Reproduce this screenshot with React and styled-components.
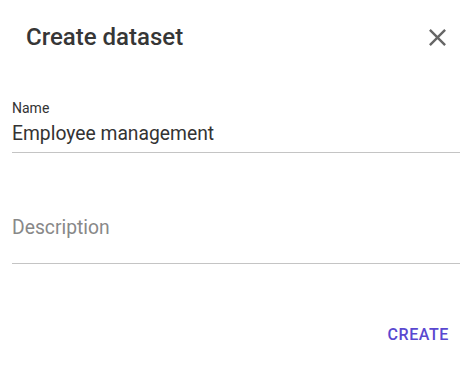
import styled, { createGlobalStyle } from 'styled-components';

const Global = createGlobalStyle`
    html, body {
        margin: 0;
        padding: 0;
        background: #ffffff;
    }
    body {
        font-family: Roboto, "Liberation Sans", sans-serif;
    }
`;

const Dialog = styled.div`
    width: 474px;
    height: 369px;
    box-sizing: border-box;
    background: #ffffff;
    display: flex;
    flex-direction: column;
`;

const Header = styled.div`
    display: flex;
    align-items: center;
    justify-content: space-between;
    height: 74px;
    padding: 0 21px 0 26px;
`;

const Title = styled.h2`
    margin: 0;
    font-size: 24px;
    font-weight: 500;
    color: #363636;
`;

const CloseButton = styled.button`
    border: 0;
    background: transparent;
    padding: 0;
    width: 32px;
    height: 32px;
    display: flex;
    align-items: center;
    justify-content: center;
    color: #666666;
    cursor: pointer;
`;

const Body = styled.div`
    display: flex;
    flex-direction: column;
    padding: 0 14px 0 12px;
`;

const Field = styled.label`
    display: flex;
    flex-direction: column;
    height: ${p => p.$height}px;
    justify-content: flex-end;
    border-bottom: 1px solid #c4c4c4;
    padding-bottom: ${p => p.$pb}px;
    box-sizing: border-box;
`;

const Label = styled.span`
    font-size: 14px;
    color: #333333;
    margin-bottom: 6px;
`;

const Value = styled.span`
    font-size: 19.3px;
    color: ${p => (p.$placeholder ? '#888888' : '#333333')};
    line-height: 24px;
`;

const Spacer = styled.div`
    height: ${p => p.$h}px;
`;

const Footer = styled.div`
    margin-top: auto;
    display: flex;
    justify-content: flex-end;
    padding: 0 25px 25px 0;
`;

const Action = styled.button`
    border: 0;
    background: transparent;
    font-family: Roboto, "Liberation Sans", sans-serif;
    font-size: 16px;
    font-weight: 500;
    letter-spacing: 0.6px;
    color: #5a48d0;
    padding: 0;
    cursor: pointer;
`;

const App = () => {
    return (
        <Dialog>
            <Global />
            <Header>
                <Title>Create dataset</Title>
                <CloseButton type="button" aria-label="Close">
                    <svg width="29" height="29" viewBox="0 0 24 24" fill="currentColor">
                        <path d="M19 6.41 17.59 5 12 10.59 6.41 5 5 6.41 10.59 12 5 17.59 6.41 19 12 13.41 17.59 19 19 17.59 13.41 12z" />
                    </svg>
                </CloseButton>
            </Header>
            <Body>
                <Field $height={79} $pb={6}>
                    <Label>Name</Label>
                    <Value>Employee management</Value>
                </Field>
                <Spacer $h={34} />
                <Field $height={77} $pb={23}>
                    <Value $placeholder>Description</Value>
                </Field>
            </Body>
            <Footer>
                <Action type="button">CREATE</Action>
            </Footer>
        </Dialog>
    );
};

export default App;
